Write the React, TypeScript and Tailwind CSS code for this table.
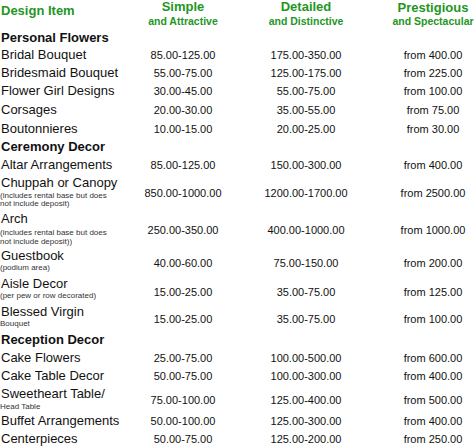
import React from "react";

type Row =
  | { kind: "section"; name: string; h: number }
  | {
      kind: "item";
      name: string;
      sub?: string[];
      subMt?: number;
      prices: [string, string, string];
      h: number;
      pt?: number;
    };

const rows: Row[] = [
  { kind: "section", name: "Personal Flowers", h: 16.6 },
  { kind: "item", name: "Bridal Bouquet", prices: ["85.00-125.00", "175.00-350.00", "from 400.00"], h: 18 },
  { kind: "item", name: "Bridesmaid Bouquet", prices: ["55.00-75.00", "125.00-175.00", "from 225.00"], h: 18.4 },
  { kind: "item", name: "Flower Girl Designs", prices: ["30.00-45.00", "55.00-75.00", "from 100.00"], h: 19.3 },
  { kind: "item", name: "Corsages", prices: ["20.00-30.00", "35.00-55.00", "from 75.00"], h: 18.3 },
  { kind: "item", name: "Boutonnieres", prices: ["10.00-15.00", "20.00-25.00", "from 30.00"], h: 18.4 },
  { kind: "section", name: "Ceremony Decor", h: 17.6 },
  { kind: "item", name: "Altar Arrangements", prices: ["85.00-125.00", "150.00-300.00", "from 400.00"], h: 18 },
  {
    kind: "item",
    name: "Chuppah or Canopy",
    sub: ["(includes rental base but does", "not include deposit)"],
    subMt: -0.2,
    prices: ["850.00-1000.00", "1200.00-1700.00", "from 2500.00"],
    h: 36.7,
    pt: 10,
  },
  {
    kind: "item",
    name: "Arch",
    sub: ["(includes rental base but does", "not include deposit))"],
    subMt: 0.3,
    prices: ["250.00-350.00", "400.00-1000.00", "from 1000.00"],
    h: 37,
    pt: 10.7,
  },
  {
    kind: "item",
    name: "Guestbook",
    sub: ["(podium area)"],
    subMt: -1.5,
    prices: ["40.00-60.00", "75.00-150.00", "from 200.00"],
    h: 28,
    pt: 7,
  },
  {
    kind: "item",
    name: "Aisle Decor",
    sub: ["(per pew or row decorated)"],
    subMt: -1.9,
    prices: ["15.00-25.00", "35.00-75.00", "from 125.00"],
    h: 27.7,
    pt: 7.4,
  },
  {
    kind: "item",
    name: "Blessed Virgin",
    sub: ["Bouquet"],
    subMt: -1.2,
    prices: ["15.00-25.00", "35.00-75.00", "from 100.00"],
    h: 27.6,
    pt: 7.3,
  },
  { kind: "section", name: "Reception Decor", h: 18 },
  { kind: "item", name: "Cake Flowers", prices: ["25.00-75.00", "100.00-500.00", "from 600.00"], h: 18.4 },
  { kind: "item", name: "Cake Table Decor", prices: ["50.00-75.00", "100.00-300.00", "from 400.00"], h: 18.3 },
  {
    kind: "item",
    name: "Sweetheart Table/",
    sub: ["Head Table"],
    subMt: -0.9,
    prices: ["75.00-100.00", "125.00-400.00", "from 500.00"],
    h: 27,
    pt: 5.7,
  },
  { kind: "item", name: "Buffet Arrangements", prices: ["50.00-100.00", "125.00-300.00", "from 400.00"], h: 18 },
  { kind: "item", name: "Centerpieces", prices: ["50.00-75.00", "125.00-200.00", "from 250.00"], h: 18 },
];

const grid = "grid grid-cols-[130px_106px_140px_98px]";

export default function App() {
  return (
    <div
      className="w-[474px] h-[447px] overflow-hidden bg-white text-[#111111]"
      style={{ fontFamily: '"Liberation Sans", Arial, sans-serif' }}
    >
      {/* Header */}
      <div className={`${grid} h-[29.2px] text-[#1f961f] font-bold`}>
        <div className="pl-[1px] pt-[4px] text-[13px] leading-[14px]">Design Item</div>
        <div className="flex flex-col items-center">
          <span className="text-[13px] leading-[14px]">Simple</span>
          <span className="text-[10.5px] leading-[12px] mt-[1px]">and Attractive</span>
        </div>
        <div className="flex flex-col items-center">
          <span className="text-[13px] leading-[14px]">Detailed</span>
          <span className="text-[10.5px] leading-[12px] mt-[0.5px]">and Distinctive</span>
        </div>
        <div className="flex flex-col items-center pl-[16px] pt-[1px]">
          <span className="text-[13px] leading-[14px]">Prestigious</span>
          <span className="text-[10.5px] leading-[12px]">and Spectacular</span>
        </div>
      </div>

      {rows.map((r, i) => {
        if (r.kind === "section") {
          return (
            <div key={i} className="pl-[1px] font-bold text-[13px] leading-[18px]" style={{ height: r.h }}>
              {r.name}
            </div>
          );
        }
        const multi = !!r.sub;
        return (
          <div
            key={i}
            className={`${grid} ${multi ? "items-start" : "items-baseline"} text-[13px] leading-[18px]`}
            style={{ height: r.h }}
          >
            <div className="pl-[1px] whitespace-nowrap">
              <div className="leading-[18px]">{r.name}</div>
              {r.sub && (
                <div
                  className="text-[8px] leading-[8.8px] text-[#333333] -ml-[1px]"
                  style={{ marginTop: r.subMt ?? 0 }}
                >
                  {r.sub.map((s, j) => (
                    <div key={j}>{s}</div>
                  ))}
                </div>
              )}
            </div>
            {r.prices.map((p, j) => (
              <div
                key={j}
                className={`text-center text-[11px] leading-[18px] whitespace-nowrap ${j === 2 ? "pl-[16px]" : ""}`}
                style={multi ? { paddingTop: r.pt } : undefined}
              >
                {p}
              </div>
            ))}
          </div>
        );
      })}
    </div>
  );
}
